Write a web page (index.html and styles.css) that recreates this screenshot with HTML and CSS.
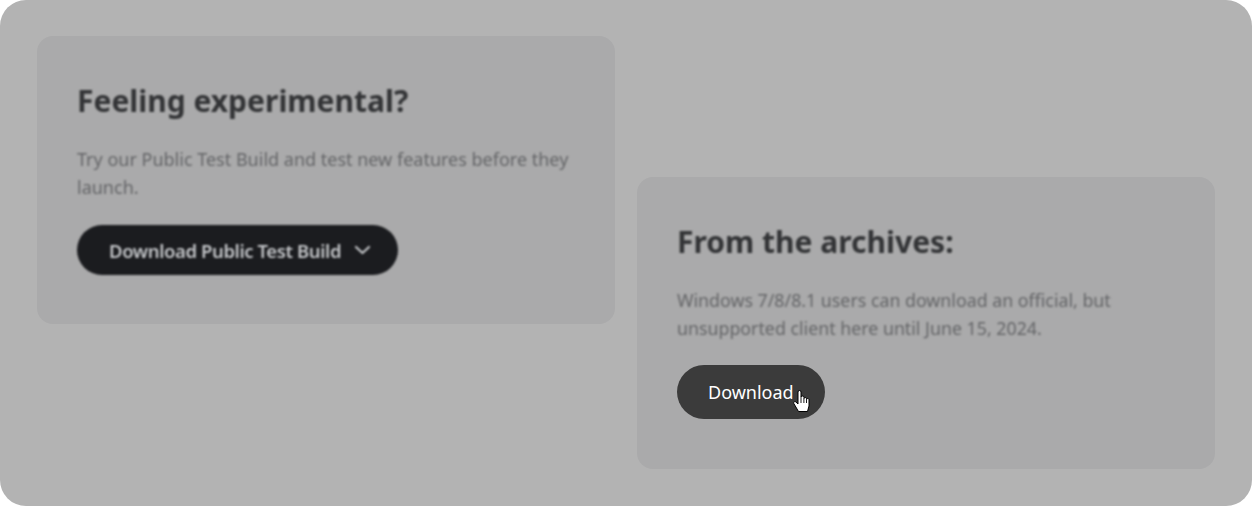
FILE: index.html
```html
<!DOCTYPE html>
<html lang="en">
<head>
    <meta charset="UTF-8">
    <meta name="viewport" content="width=device-width, initial-scale=1.0">
    <title>Download</title>
    <link rel="stylesheet" href="styles.css">
</head>
<body>
    <div class="page">
        <div class="card card-left">
            <h2 class="blur">Feeling experimental?</h2>
            <p class="blur">Try our Public Test Build and test new features before they launch.</p>
            <div class="actions">
                <button class="btn-dark blur">
                    Download Public Test Build
                    <svg width="17" height="10" viewBox="0 0 17 10"><path d="M2 2l6.5 6 6.5-6" fill="none" stroke="currentColor" stroke-width="2.2" stroke-linecap="round" stroke-linejoin="round"/></svg>
                </button>
            </div>
        </div>
        <div class="card card-right">
            <h2 class="blur">From the archives:</h2>
            <p class="blur">Windows 7/8/8.1 users can download an official, but unsupported client here until June 15, 2024.</p>
            <div class="actions">
                <button class="btn-grey">
                    Download
                    <svg class="cursor" width="17" height="22" viewBox="0 0 17 22"><path d="M6.5 0.5a1.5 1.5 0 0 1 1.5 1.5V7.5a1.5 1.5 0 0 1 3 0V8.5a1.3 1.3 0 0 1 2.5 0V9.5a1.3 1.3 0 0 1 2.5 0V16l-1.5 5.5H5.5L0.8 13.5a1.3 1.3 0 0 1 2-1.6L5 14V2a1.5 1.5 0 0 1 1.5-1.5z" fill="#fff" stroke="#000" stroke-width="1"/><path d="M8 8v5M10.9 8.5v4.5M13.5 9.5v3.5" stroke="#000" stroke-width="0.9" fill="none"/></svg>
                </button>
            </div>
        </div>
    </div>
</body>
</html>
```

FILE: styles.css
```css
html, body {
    margin: 0;
    padding: 0;
    background-color: #fff;
}
body {
    font-family: "Noto Sans", Arial, sans-serif;
}
.page {
    box-sizing: border-box;
    width: 1252px;
    height: 506px;
    padding: 36px 37px 37px 37px;
    background-color: #b3b3b3;
    border-radius: 26px;
    display: grid;
    grid-template-columns: 578px 578px;
    column-gap: 22px;
}
.card {
    background-color: #aaaaab;
    border-radius: 16px;
    padding: 48px 40px 49px 40px;
}
.card-left {
    align-self: start;
}
.card-right {
    align-self: end;
    padding-bottom: 50px;
}
.blur {
    filter: blur(0.8px);
}
.card h2 {
    margin: 0 0 27px 0;
    font-size: 30px;
    line-height: 34px;
    font-weight: 700;
    color: #333436;
}
.card p {
    margin: 0 0 24px 0;
    font-size: 18px;
    line-height: 28px;
    color: #646567;
    max-width: 500px;
}
.card-right p {
    margin-bottom: 23px;
    font-size: 17.8px;
}
.actions {
    display: flex;
}
.btn-dark {
    height: 50px;
    padding: 0 27px 0 32px;
    border: none;
    border-radius: 25px;
    background-color: #1b1c1f;
    color: #c4c6c9;
    font-family: "Noto Sans", Arial, sans-serif;
    font-size: 18.5px;
    font-weight: 600;
    letter-spacing: -0.4px;
    display: flex;
    align-items: center;
    gap: 13px;
}
.btn-grey {
    position: relative;
    height: 54px;
    width: 148px;
    padding: 0 0 0 31px;
    border: none;
    border-radius: 27px;
    background-color: #3b3b3b;
    color: #fff;
    font-family: "Noto Sans", Arial, sans-serif;
    font-size: 18px;
    text-align: left;
}
.cursor {
    position: absolute;
    left: 116px;
    top: 25px;
}
```
